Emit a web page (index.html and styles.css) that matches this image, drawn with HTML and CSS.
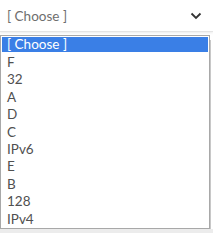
FILE: index.html
```html
<!DOCTYPE html>
<html>
<head>
<meta charset="utf-8">
<link rel="stylesheet" href="styles.css">
</head>
<body>
<div class="page">
  <div class="select">
    <span class="value">[ Choose ]</span>
    <svg class="chev" width="12" height="8" viewBox="0 0 12 8"><path d="M1.5 1.5 L6 6 L10.5 1.5" fill="none" stroke="#333" stroke-width="1.8"/></svg>
  </div>
  <div class="list">
    <div class="opt sel">[ Choose ]</div>
    <div class="opt">F</div>
    <div class="opt">32</div>
    <div class="opt">A</div>
    <div class="opt">D</div>
    <div class="opt">C</div>
    <div class="opt">IPv6</div>
    <div class="opt">E</div>
    <div class="opt">B</div>
    <div class="opt">128</div>
    <div class="opt">IPv4</div>
  </div>
  <div class="rule"></div>
  <div class="edge"></div>
</div>
</body>
</html>
```
FILE: styles.css
```css
html, body { margin: 0; padding: 0; background: #fff; }
body { font-family: Lato, "Liberation Sans", sans-serif; width: 213px; height: 233px; overflow: hidden; }
.page { position: relative; width: 213px; height: 233px; background: #fff; }
.select {
  height: 32px;
  display: flex; align-items: center; justify-content: space-between;
  padding: 0 11px 0 7px;
  box-sizing: border-box;
  border-bottom: 1px solid #e4e4e4;
  box-shadow: 0 1px 2px rgba(0,0,0,0.08);
  color: #6e6e6e; font-size: 13.5px;
}
.chev { margin-top: 1px; }
.list {
  margin-top: 3px;
  width: 210px;
  box-sizing: border-box;
  border: 1px solid #a8a8a8;
  padding: 1px 0 0 0;
  background: #fff;
  height: 194px;
  position: relative; z-index: 1;
}
.opt {
  height: 17.4px; line-height: 17px;
  font-size: 13.5px; color: #505050;
  padding-left: 6px;
}
.opt.sel { background: #3a7fe6; color: #fff; height: 15px; line-height: 15px; margin: 0 0 2px 1px; width: 206px; box-sizing: border-box; padding-left: 5px; }
.rule { position: absolute; left: 210px; top: 40px; width: 1px; height: 193px; background: #c8c8c8; }
.edge { position: absolute; left: 0; top: 229px; width: 213px; height: 4px; background: #ececec; }
```
